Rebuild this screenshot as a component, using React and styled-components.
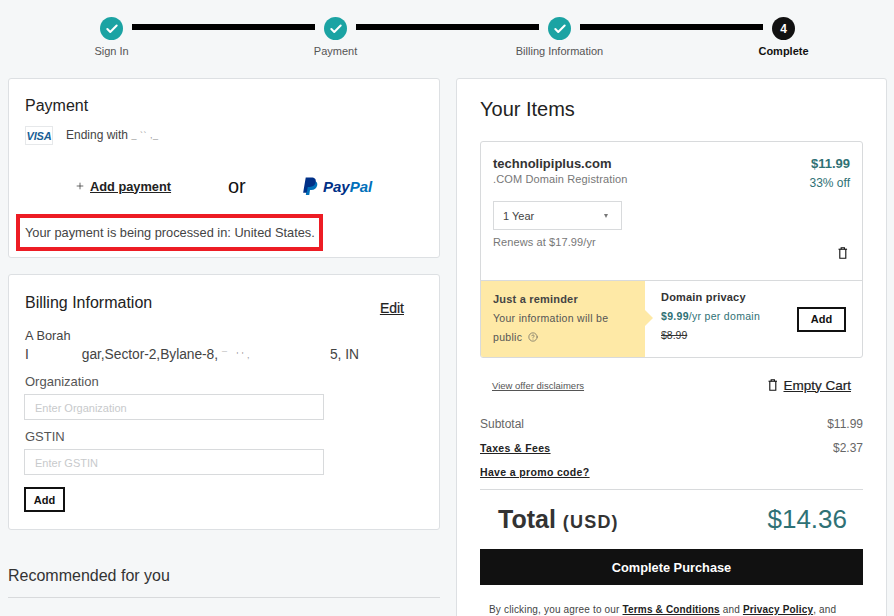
import React from "react";
import styled, { createGlobalStyle } from "styled-components";
import { Check, CircleHelp, Plus } from "lucide-react";

const steps = ["Sign In", "Payment", "Billing Information", "Complete"];

const TrashIcon = ({ size = 14 }) => (
  <svg width={size * 0.8} height={size} viewBox="0 0 11 14" fill="none" stroke="#111" strokeWidth="1.3">
    <path d="M0.5 2.6H10.5" />
    <path d="M3.6 2.6V0.8H7.4V2.6" />
    <path d="M2 2.6V13.2H9V2.6" />
  </svg>
);

const PayPalMark = () => (
  <svg width="16" height="19" viewBox="0 0 16 20">
    <path d="M5.8 4H10.8C14.6 4 16.2 6 15.6 8.8 15 12 12.6 13.8 9.4 13.8H8L7.2 19H3.6Z" fill="#0070ba" />
    <path d="M3.5 0.5H9.5C13 0.5 14.6 2.3 14 5.2 13.4 8.6 11 10.4 7.6 10.4H5.6L4.6 16.5H0.8Z" fill="#003087" />
  </svg>
);

const App = () => (
  <React.Fragment>
    <GlobalStyle />
    <Stepper>
      {steps.map((step, i) => (
        <React.Fragment key={step}>
          <Circle $col={i * 2 + 1} $current={i === 3}>
            {i === 3 ? "4" : <Check size={14} strokeWidth={3.5} color="#fff" />}
          </Circle>
          {i < 3 && <Connector $col={i * 2 + 2} />}
          <StepLabel $col={i * 2 + 1} $current={i === 3}>{step}</StepLabel>
        </React.Fragment>
      ))}
    </Stepper>
    <Columns>
      <LeftColumn>
        <PaymentCard>
          <CardTitle>Payment</CardTitle>
          <CardRow>
            <VisaBadge>VISA</VisaBadge>
            <EndingText>Ending with <Smudge>_ `` ,_</Smudge></EndingText>
          </CardRow>
          <AddRow>
            <AddPayment>
              <Plus size={10} strokeWidth={1.6} color="#222" />
              <BoldLink>Add payment</BoldLink>
            </AddPayment>
            <OrText>or</OrText>
            <PayPalLogo>
              <PayPalMark />
              <PayPalText>Pay<PayPalLight>Pal</PayPalLight></PayPalText>
            </PayPalLogo>
          </AddRow>
          <Notice>Your payment is being processed in: United States.</Notice>
        </PaymentCard>
        <BillingCard>
          <BillingHead>
            <CardTitle>Billing Information</CardTitle>
            <EditLink>Edit</EditLink>
          </BillingHead>
          <BillingName>A Borah</BillingName>
          <Address>
            I<Gap $w={53} />gar,Sector-2,Bylane-8,<Gap $w={112}><Smudge>{"¯   ' ' ,"}</Smudge></Gap>5, IN
          </Address>
          <FieldLabel>Organization</FieldLabel>
          <TextField placeholder="Enter Organization" />
          <FieldLabel>GSTIN</FieldLabel>
          <TextField placeholder="Enter GSTIN" />
          <OutlineButton $w={41}>Add</OutlineButton>
        </BillingCard>
        <Recommended>Recommended for you</Recommended>
      </LeftColumn>
      <ItemsCard>
        <ItemsTitle>Your Items</ItemsTitle>
        <ItemBox>
          <ItemTop>
            <ItemHead>
              <div>
                <DomainName>technolipiplus.com</DomainName>
                <DomainType>.COM Domain Registration</DomainType>
              </div>
              <PriceBlock>
                <Price>$11.99</Price>
                <Discount>33% off</Discount>
              </PriceBlock>
            </ItemHead>
            <TermSelect>
              <span>1 Year</span>
              <SelectArrow />
            </TermSelect>
            <RenewRow>
              <span>Renews at $17.99/yr</span>
              <TrashIcon size={12} />
            </RenewRow>
          </ItemTop>
          <UpsellRow>
            <Reminder>
              <ReminderTitle>Just a reminder</ReminderTitle>
              <ReminderLine>Your information will be</ReminderLine>
              <ReminderLine>
                public <HelpIcon size={10} strokeWidth={1.5} />
              </ReminderLine>
            </Reminder>
            <Upsell>
              <UpsellText>
                <UpsellTitle>Domain privacy</UpsellTitle>
                <UpsellPrice><strong>$9.99</strong>/yr per domain</UpsellPrice>
                <OldPrice>$8.99</OldPrice>
              </UpsellText>
              <OutlineButton $w={49}>Add</OutlineButton>
            </Upsell>
          </UpsellRow>
        </ItemBox>
        <CartLinks>
          <Disclaimers>View offer disclaimers</Disclaimers>
          <EmptyCart>
            <TrashIcon size={12} />
            <EmptyCartText>Empty Cart</EmptyCartText>
          </EmptyCart>
        </CartLinks>
        <Summary>
          <SummaryRow>
            <span>Subtotal</span>
            <span>$11.99</span>
          </SummaryRow>
          <SummaryRow>
            <SummaryLink>Taxes &amp; Fees</SummaryLink>
            <span>$2.37</span>
          </SummaryRow>
          <PromoRow>
            <SummaryLink>Have a promo code?</SummaryLink>
          </PromoRow>
        </Summary>
        <TotalRow>
          <TotalLabel>Total <Currency>(USD)</Currency></TotalLabel>
          <TotalValue>$14.36</TotalValue>
        </TotalRow>
        <PurchaseButton>Complete Purchase</PurchaseButton>
        <Terms>
          By clicking, you agree to our <TermsLink>Terms &amp; Conditions</TermsLink> and{" "}
          <TermsLink>Privacy Policy</TermsLink>, and
        </Terms>
      </ItemsCard>
    </Columns>
  </React.Fragment>
);

export default App;

const GlobalStyle = createGlobalStyle`
  html, body {
    margin: 0;
    height: 616px;
    overflow: hidden;
    background: #f5f7f8;
    font-family: "Liberation Sans", Arial, sans-serif;
    color: #222;
  }
  * {
    box-sizing: border-box;
  }
`;

const Stepper = styled.div`
  display: grid;
  grid-template-columns: 23px 201px 23px 201px 23px 201px 23px;
  grid-template-rows: 23px auto;
  height: 78px;
  padding: 17px 0 0 100px;
`;

const Circle = styled.div`
  grid-column: ${(p) => p.$col};
  grid-row: 1;
  width: 23px;
  height: 23px;
  border-radius: 50%;
  background: ${(p) => (p.$current ? "#111" : "#1ba3a3")};
  color: #fff;
  display: flex;
  align-items: center;
  justify-content: center;
  font-size: 12px;
  font-weight: 700;
`;

const Connector = styled.div`
  grid-column: ${(p) => p.$col};
  grid-row: 1;
  height: 6px;
  margin: 7px 9px 0;
  background: #000;
`;

const StepLabel = styled.div`
  grid-column: ${(p) => p.$col};
  grid-row: 2;
  justify-self: center;
  white-space: nowrap;
  margin-top: 4px;
  font-size: 11px;
  line-height: 14px;
  color: ${(p) => (p.$current ? "#111" : "#555")};
  font-weight: ${(p) => (p.$current ? 700 : 400)};
`;

const Columns = styled.div`
  display: grid;
  grid-template-columns: 432px 431px;
  gap: 16px;
  padding-left: 8px;
  align-items: start;
`;

const LeftColumn = styled.div`
  display: flex;
  flex-direction: column;
  gap: 16px;
`;

const Card = styled.section`
  background: #fff;
  border: 1px solid #dde0e3;
  border-radius: 3px;
`;

const PaymentCard = styled(Card)`
  height: 180px;
  padding: 17px 16px 0 16px;
`;

const CardTitle = styled.h2`
  margin: 0;
  font-size: 16px;
  line-height: 20px;
  font-weight: 400;
  color: #222;
`;

const CardRow = styled.div`
  display: flex;
  align-items: center;
  gap: 13px;
  margin-top: 10px;
`;

const VisaBadge = styled.div`
  width: 28px;
  height: 19px;
  border: 1px solid #e6e8ea;
  display: flex;
  align-items: center;
  justify-content: center;
  font-size: 11px;
  font-weight: 700;
  font-style: italic;
  letter-spacing: -0.2px;
  color: #1a5f96;
`;

const EndingText = styled.span`
  font-size: 12px;
  color: #444;
  position: relative;
  top: -1px;
`;

const Smudge = styled.span`
  color: #999;
  font-size: 9px;
  letter-spacing: 0.5px;
  white-space: pre;
  vertical-align: 1px;
`;

const AddRow = styled.div`
  display: flex;
  align-items: center;
  margin-top: 29px;
  height: 24px;
  padding-left: 50px;
`;

const AddPayment = styled.div`
  display: flex;
  align-items: center;
  gap: 5px;
  width: 153px;
`;

const BoldLink = styled.a`
  font-size: 12.8px;
  font-weight: 700;
  color: #222;
  text-decoration: underline;
`;

const OrText = styled.span`
  font-size: 20px;
  color: #111;
  width: 74px;
`;

const PayPalLogo = styled.div`
  display: flex;
  align-items: center;
  gap: 5px;
`;

const PayPalText = styled.span`
  font-size: 15px;
  font-weight: 700;
  font-style: italic;
  color: #003087;
`;

const PayPalLight = styled.span`
  color: #0070ba;
`;

const Notice = styled.div`
  width: 307px;
  height: 37px;
  margin: 16px 0 0 -9px;
  border: 4px solid #ed1c24;
  display: flex;
  align-items: center;
  padding-left: 5px;
  font-size: 12.8px;
  white-space: nowrap;
  color: #444;
`;

const BillingCard = styled(Card)`
  height: 256px;
  padding: 18px 15px 0 15px;
`;

const BillingHead = styled.div`
  display: flex;
  justify-content: space-between;
  align-items: flex-start;
  padding-left: 1px;
`;

const EditLink = styled.a`
  font-size: 14px;
  color: #222;
  text-decoration: underline;
  margin: 7px 20px 0 0;
  -webkit-text-stroke: 0.2px #222;
`;

const BillingName = styled.div`
  margin-top: 10px;
  padding-left: 1px;
  font-size: 12.8px;
  line-height: 19px;
  color: #444;
`;

const Address = styled.div`
  padding-left: 1px;
  font-size: 13.8px;
  letter-spacing: -0.05px;
  line-height: 19px;
  white-space: nowrap;
  color: #444;
`;

const Gap = styled.span`
  display: inline-block;
  width: ${(p) => p.$w}px;
  padding-left: 4px;
`;

const FieldLabel = styled.div`
  margin-top: 8px;
  padding-left: 1px;
  font-size: 13px;
  line-height: 17px;
  color: #555;
`;

const TextField = styled.input`
  display: block;
  width: 300px;
  height: 26px;
  margin: 4px 0 2px;
  padding: 2px 10px 0;
  border: 1px solid #d8dadc;
  border-radius: 0;
  background: #fff;
  font-family: inherit;
  font-size: 11px;
  &::placeholder {
    color: #c8cacc;
    opacity: 1;
  }
`;

const OutlineButton = styled.button`
  width: ${(p) => p.$w}px;
  height: 25px;
  flex: none;
  padding: 0;
  border: 2px solid #111;
  border-radius: 0;
  background: #fff;
  font-family: inherit;
  font-size: 11px;
  font-weight: 700;
  color: #111;
  ${BillingCard} & {
    margin-top: 10px;
  }
`;

const Recommended = styled.h3`
  margin: 20px 0 0;
  padding-bottom: 11px;
  border-bottom: 1px solid #d8dadc;
  font-size: 16px;
  line-height: 20px;
  font-weight: 400;
  color: #333;
`;

const ItemsCard = styled(Card)`
  height: 600px;
  padding: 18px 23px 0 23px;
`;

const ItemsTitle = styled.h2`
  margin: 0;
  font-size: 20px;
  line-height: 25px;
  font-weight: 400;
  color: #222;
`;

const ItemBox = styled.div`
  height: 217px;
  margin-top: 19px;
  border: 1px solid #d8dadc;
  border-radius: 3px;
  display: flex;
  flex-direction: column;
`;

const ItemTop = styled.div`
  flex: none;
  height: 139px;
  padding: 14px 12px 0 12px;
  border-bottom: 1px solid #d8dadc;
`;

const ItemHead = styled.div`
  display: flex;
  justify-content: space-between;
`;

const DomainName = styled.div`
  font-size: 13px;
  line-height: 16px;
  font-weight: 700;
  color: #333;
`;

const DomainType = styled.div`
  font-size: 11px;
  line-height: 15px;
  letter-spacing: 0.13px;
  color: #777;
`;

const PriceBlock = styled.div`
  text-align: right;
`;

const Price = styled.div`
  font-size: 13px;
  line-height: 16px;
  font-weight: 700;
  color: #2f7175;
`;

const Discount = styled.div`
  margin-top: 4px;
  font-size: 12px;
  line-height: 15px;
  color: #2f7175;
`;

const TermSelect = styled.div`
  width: 129px;
  height: 29px;
  margin-top: 10px;
  padding: 0 13px 0 9px;
  border: 1px solid #d8dadc;
  display: flex;
  align-items: center;
  justify-content: space-between;
  font-size: 11px;
  color: #444;
`;

const SelectArrow = styled.i`
  width: 0;
  height: 0;
  border-left: 2.5px solid transparent;
  border-right: 2.5px solid transparent;
  border-top: 4px solid #777;
`;

const RenewRow = styled.div`
  display: flex;
  justify-content: space-between;
  align-items: flex-start;
  margin-top: 5px;
  padding-right: 2px;
  font-size: 11px;
  letter-spacing: 0.1px;
  line-height: 14px;
  color: #777;
  svg {
    margin-top: 12px;
  }
`;

const UpsellRow = styled.div`
  flex: 1;
  display: flex;
`;

const Reminder = styled.div`
  position: relative;
  width: 164px;
  padding: 9px 12px 0;
  background: #fee9a6;
  border-bottom-left-radius: 2px;
  color: #444;
  &::after {
    content: "";
    position: absolute;
    right: -8px;
    top: 29px;
    border-left: 8px solid #fee9a6;
    border-top: 8px solid transparent;
    border-bottom: 8px solid transparent;
  }
`;

const ReminderTitle = styled.div`
  font-size: 11px;
  line-height: 19px;
  font-weight: 700;
  letter-spacing: 0.2px;
`;

const ReminderLine = styled.div`
  font-size: 10.5px;
  line-height: 19px;
  letter-spacing: 0.3px;
  color: #555;
`;

const HelpIcon = styled(CircleHelp)`
  margin-left: 3px;
  vertical-align: -1px;
`;

const Upsell = styled.div`
  flex: 1;
  display: flex;
  align-items: center;
  justify-content: space-between;
  padding: 0 16px 0 16px;
`;

const UpsellText = styled.div`
  margin-top: -6px;
`;

const UpsellTitle = styled.div`
  font-size: 11px;
  line-height: 19px;
  font-weight: 700;
  letter-spacing: 0.2px;
  color: #333;
`;

const UpsellPrice = styled.div`
  font-size: 10.5px;
  line-height: 19px;
  letter-spacing: 0.3px;
  color: #2f7175;
`;

const OldPrice = styled.div`
  font-size: 10.5px;
  line-height: 19px;
  color: #333;
  text-decoration: line-through;
`;

const CartLinks = styled.div`
  display: flex;
  justify-content: space-between;
  align-items: center;
  height: 20px;
  margin-top: 17px;
  padding: 0 12px;
`;

const Disclaimers = styled.a`
  font-size: 9.5px;
  color: #555;
  text-decoration: underline;
`;

const EmptyCart = styled.div`
  display: flex;
  align-items: center;
  gap: 6px;
`;

const EmptyCartText = styled.a`
  font-size: 13.5px;
  color: #222;
  text-decoration: underline;
  -webkit-text-stroke: 0.2px #222;
`;

const Summary = styled.div`
  margin-top: 17px;
`;

const SummaryRow = styled.div`
  display: flex;
  justify-content: space-between;
  align-items: center;
  height: 24px;
  font-size: 12px;
  color: #666;
`;

const SummaryLink = styled.a`
  font-size: 10.5px;
  font-weight: 700;
  letter-spacing: 0.35px;
  color: #222;
  text-decoration: underline;
`;

const PromoRow = styled.div`
  height: 30px;
  padding-top: 2px;
  border-bottom: 1px solid #d8dadc;
`;

const TotalRow = styled.div`
  display: flex;
  justify-content: space-between;
  align-items: baseline;
  height: 59px;
  padding: 14px 16px 0 18px;
`;

const TotalLabel = styled.div`
  font-size: 25px;
  font-weight: 700;
  color: #333;
`;

const Currency = styled.span`
  font-size: 18px;
  letter-spacing: 1.2px;
`;

const TotalValue = styled.div`
  font-size: 26px;
  color: #2f7175;
`;

const PurchaseButton = styled.button`
  display: block;
  width: 100%;
  height: 36px;
  border: 0;
  background: #111;
  color: #fff;
  font-family: inherit;
  font-size: 12.8px;
  font-weight: 700;
`;

const Terms = styled.p`
  margin: 18px 0 0;
  padding-left: 9px;
  font-size: 10px;
  line-height: 14px;
  letter-spacing: 0.17px;
  white-space: nowrap;
  color: #444;
`;

const TermsLink = styled.a`
  font-weight: 700;
  color: #222;
  text-decoration: underline;
`;
